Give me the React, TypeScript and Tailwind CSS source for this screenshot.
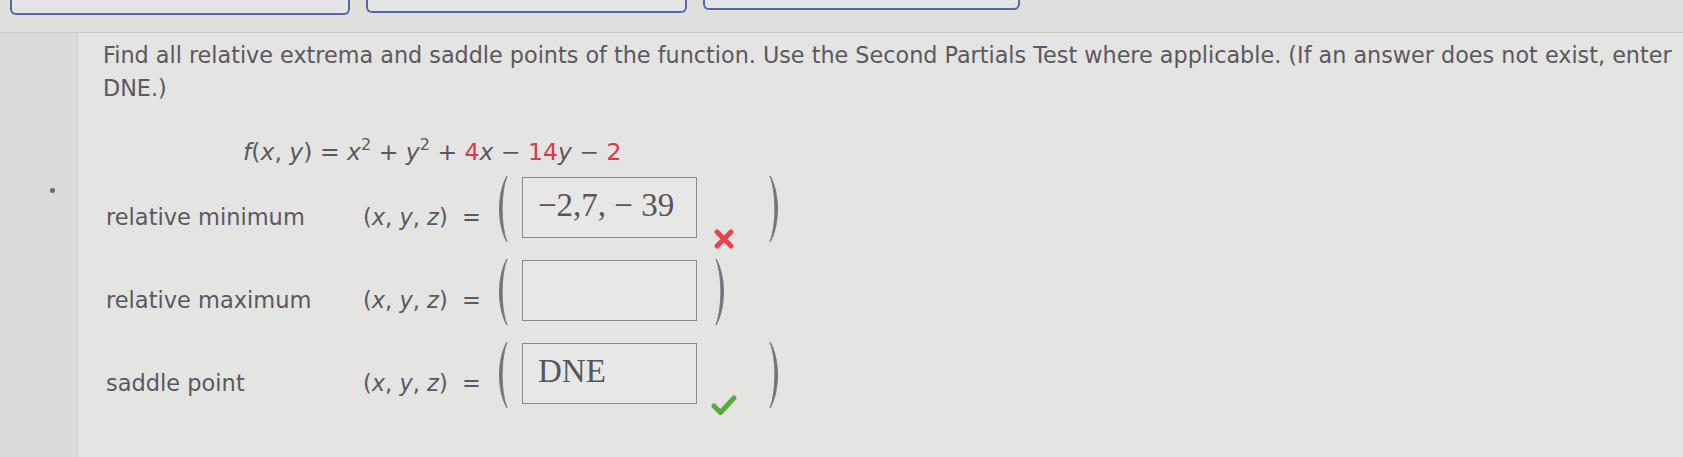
import type { ReactNode } from "react";

const sans = "font-['DejaVu_Sans','Verdana',sans-serif]";
const serif = "font-['Liberation_Serif','Times_New_Roman',serif]";

function Paren({ side }: { side: "left" | "right" }) {
  const d =
    side === "left"
      ? "M11 1 C 1 18, 1 50, 11 67 C 4.5 50, 4.5 18, 11 1 Z"
      : "M1 1 C 11 18, 11 50, 1 67 C 7.5 50, 7.5 18, 1 1 Z";
  return (
    <svg width="12" height="68" viewBox="0 0 12 68" className="shrink-0 mt-[-2px]">
      <path d={d} fill="#75727a" stroke="#75727a" strokeWidth="0.9" strokeLinejoin="round" />
    </svg>
  );
}

function Cross() {
  return (
    <svg width="22" height="22" viewBox="0 0 22 22">
      <path d="M4 4 L18 18 M18 4 L4 18" stroke="#e5454e" strokeWidth="5" strokeLinecap="round" />
    </svg>
  );
}

function Check() {
  return (
    <svg width="26" height="22" viewBox="0 0 26 22">
      <path
        d="M3 12 L9.5 18.5 L23 4"
        fill="none"
        stroke="#5aab3a"
        strokeWidth="5"
        strokeLinecap="round"
        strokeLinejoin="round"
      />
    </svg>
  );
}

function Row({
  label,
  value,
  feedback,
}: {
  label: string;
  value?: string;
  feedback?: ReactNode;
}) {
  return (
    <div className="flex items-start h-[61px]">
      <div className="flex w-[390px] pt-[20px] h-[61px] items-center text-[22.5px]">
        <span className="w-[257px]">{label}</span>
        <span>
          (<i>x</i>, <i>y</i>, <i>z</i>)&nbsp;&nbsp;=
        </span>
      </div>
      <Paren side="left" />
      <div
        className={`ml-[14px] w-[175px] h-[61px] border border-[#8b898e] bg-[#e7e7e5] flex items-center pl-[15px] pb-[3px] text-[33px] text-[#57555b] ${serif}`}
      >
        {value}
      </div>
      {feedback ? (
        <>
          <div className="ml-[14px] self-end mb-[-12px] w-[26px] flex justify-center">{feedback}</div>
          <div className="ml-[32px]">
            <Paren side="right" />
          </div>
        </>
      ) : (
        <div className="ml-[18px]">
          <Paren side="right" />
        </div>
      )}
    </div>
  );
}

export default function App() {
  return (
    <div className={`w-[1683px] h-[457px] overflow-hidden bg-[#e4e4e2] text-[#5b585f] ${sans} flex flex-col`}>
      <div className="h-[33px] shrink-0 bg-[#dfdfdd] border-b border-[#c9c9c8] flex gap-[16px] pl-[10px]">
        <div className="w-[340px] h-[15px] border-2 border-t-0 border-[#5667a6] rounded-b-[6px] bg-[#e3e4e5]" />
        <div className="w-[321px] h-[13px] border-2 border-t-0 border-[#5667a6] rounded-b-[6px] bg-[#e3e4e5]" />
        <div className="w-[317px] h-[10px] border-2 border-t-0 border-[#5667a6] rounded-b-[6px] bg-[#e3e4e5]" />
      </div>
      <div className="flex flex-1 min-h-0">
        <div className="w-[78px] shrink-0 bg-[#dadad8] border-r border-[#cdcdcb] relative">
          <span className="absolute left-[50px] top-[155px] w-[5px] h-[5px] rounded-full bg-[#6b6870]" />
        </div>
        <div className="flex-1 pl-[25px] pr-[4px] text-[22.3px]">
          <p className="pt-[6px] leading-[33px]">
            Find all relative extrema and saddle points of the function. Use the Second Partials Test where
            applicable. (If an answer does not exist, enter DNE.)
          </p>
          <div className="mt-[32px] pl-[140px] leading-[30px] text-[23.5px]">
            <i>f</i>(<i>x</i>, <i>y</i>) = <i>x</i>
            <sup className="text-[16px] top-[-0.6em]">2</sup> + <i>y</i>
            <sup className="text-[16px] top-[-0.6em]">2</sup> + <span className="text-[#d9394a]">4</span>
            <i>x</i> − <span className="text-[#d9394a]">14</span>
            <i>y</i> − <span className="text-[#d9394a]">2</span>
          </div>
          <div className="mt-[10px] flex flex-col gap-[22px] pl-[3px]">
            <Row label="relative minimum" value="−2,7, − 39" feedback={<Cross />} />
            <Row label="relative maximum" />
            <Row label="saddle point" value="DNE" feedback={<Check />} />
          </div>
        </div>
      </div>
    </div>
  );
}
